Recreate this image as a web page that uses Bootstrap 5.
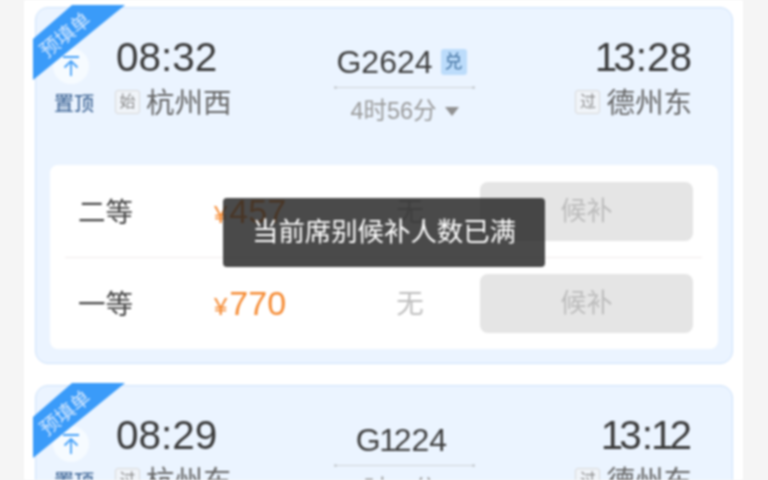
<!DOCTYPE html>
<html lang="zh">
<head>
<meta charset="utf-8">
<title>车次列表</title>
<link href="https://cdn.jsdelivr.net/npm/bootstrap@5.3.0/dist/css/bootstrap.min.css" rel="stylesheet">
<style>
html,body{height:480px;overflow:hidden;background:#f5f5f5;}
body{font-family:"Liberation Sans","Noto Sans CJK SC",sans-serif;color:#3c3c3c;}
.sheet{position:relative;width:719px;height:480px;margin-left:24px;background:#fff;padding:7px 10px 0 11px;filter:blur(.8px);overflow:hidden;}
.trip{position:relative;background:#ebf4ff;border:1.5px solid #cde2fb;border-radius:13px;height:357px;margin-bottom:21px;}
.ribbon{position:absolute;left:-4px;top:-3px;width:93px;height:75px;}
.ribbon-text{position:absolute;left:-3px;top:16px;width:64px;text-align:center;font-size:19.5px;line-height:22px;color:#d3e7fe;transform:rotate(-39deg);white-space:nowrap;}
.head{height:157px;}
.pin{width:80px;padding-top:40px;flex:none;}
.pin-disc{width:36px;height:36px;border-radius:50%;background:#f6fbff;margin-left:17px;}
.pin-label{font-size:20px;line-height:24px;color:#4a6f9d;font-weight:500;margin:8px 0 0 18px;white-space:nowrap;}
.dep{width:218px;flex:none;padding-top:26px;}
.clock{font-size:40.5px;line-height:46px;color:#3a3a3a;}
.one{letter-spacing:-.1em;margin-left:-.05em;}
.place{font-size:28.5px;line-height:36px;color:#666;margin-top:5px;white-space:nowrap;}
.dep .place{margin-left:-1px;}
.stop{display:inline-flex;align-items:center;justify-content:center;width:25px;height:24px;border:1px solid #d8d8d8;border-radius:3px;font-size:16px;line-height:1;color:#8b8b8b;background:#f0f4f9;margin-right:2px;position:relative;top:-1px;}
.mid{width:141px;flex:none;padding-top:34px;}
.code-line{height:45px;padding-right:6px;}
.code{font-size:32px;line-height:40px;color:#3f3f3f;}
.exch{display:inline-flex;align-items:center;justify-content:center;width:26px;height:26px;background:#bcdcfb;border-radius:3px;font-size:18px;line-height:1;color:#41709f;margin-top:7px;}
.rail{position:relative;height:1px;background:#cfd3d8;}
.rail::before,.rail::after{content:"";position:absolute;top:-1px;width:3px;height:3px;border-radius:50%;background:#c6cbd1;}
.rail::before{left:0}.rail::after{right:0}
.span{font-size:23.5px;line-height:30px;color:#999;margin-top:8px;white-space:nowrap;}
.tri{width:0;height:0;border-left:7px solid transparent;border-right:7px solid transparent;border-top:9px solid #8f8f8f;}
.arr{padding:26px 40px 0 0;}
.panel{background:#fff;border-radius:8px;margin:0 14px;height:184px;}
.seat-row{height:91.5px;padding:16.5px 25px 0 28px;}
.grade{width:136px;font-size:27.5px;line-height:59px;color:#444;flex:none;padding-top:1px;}
.price{width:126px;line-height:59px;color:#f58a32;font-size:34px;flex:none;}
.yen{font-size:24px;margin-right:2px;}
.left{width:140px;text-align:center;font-size:27.5px;line-height:59px;color:#bdbdbd;flex:none;}
.btn.wait{width:213px;height:59px;padding:0;border:0;border-radius:8px;font-size:26px;line-height:59px;flex:none;--bs-btn-disabled-bg:#e5e5e5;--bs-btn-disabled-color:#bcbcbc;--bs-btn-disabled-opacity:1;}
.rule{height:1px;background:#f1ebeb;margin:0 16px 0 15px;}
.toast-box{position:absolute;left:199px;top:198px;width:322px;height:69px;background:rgba(34,34,34,.82);border-radius:4px;color:#fff;font-size:26.4px;display:flex;align-items:center;justify-content:center;white-space:nowrap;}
</style>
</head>
<body>
<div class="sheet">

  <div class="trip">
    <svg class="ribbon" viewBox="0 0 93 75"><polygon points="40,0 93,0 1,75 1,34" fill="#3a9bf9"/></svg>
    <div class="ribbon-text">预填单</div>
    <div class="head d-flex">
      <div class="pin">
        <div class="pin-disc d-flex align-items-center justify-content-center">
          <svg width="18" height="22" viewBox="0 0 18 22" fill="none" stroke="#45a0f8" stroke-width="1.8"><path d="M1 2h16M9 21V6M2.5 12.5 9 6l6.500 6.500"/></svg>
        </div>
        <div class="pin-label">置顶</div>
      </div>
      <div class="dep">
        <div class="clock">08:32</div>
        <div class="place d-flex align-items-center gap-1"><span class="stop">始</span>杭州西</div>
      </div>
      <div class="mid">
        <div class="code-line d-flex justify-content-center align-items-start gap-2"><span class="code">G2624</span><span class="exch">兑</span></div>
        <div class="rail"></div>
        <div class="span d-flex justify-content-center align-items-center gap-2">4时56分<span class="tri"></span></div>
      </div>
      <div class="arr flex-grow-1 text-end">
        <div class="clock"><span class="one">1</span>3:28</div>
        <div class="place d-flex justify-content-end align-items-center gap-1"><span class="stop">过</span>德州东</div>
      </div>
    </div>
    <div class="panel">
      <div class="seat-row d-flex">
        <div class="grade">二等</div>
        <div class="price"><span class="yen">¥</span>457</div>
        <div class="left">无</div>
        <button class="btn wait" disabled>候补</button>
      </div>
      <div class="rule"></div>
      <div class="seat-row d-flex">
        <div class="grade">一等</div>
        <div class="price"><span class="yen">¥</span>770</div>
        <div class="left">无</div>
        <button class="btn wait" disabled>候补</button>
      </div>
    </div>
  </div>

  <div class="trip">
    <svg class="ribbon" viewBox="0 0 93 75"><polygon points="40,0 93,0 1,75 1,34" fill="#3a9bf9"/></svg>
    <div class="ribbon-text">预填单</div>
    <div class="head d-flex">
      <div class="pin">
        <div class="pin-disc d-flex align-items-center justify-content-center">
          <svg width="18" height="22" viewBox="0 0 18 22" fill="none" stroke="#45a0f8" stroke-width="1.8"><path d="M1 2h16M9 21V6M2.5 12.5 9 6l6.500 6.500"/></svg>
        </div>
        <div class="pin-label">置顶</div>
      </div>
      <div class="dep">
        <div class="clock">08:29</div>
        <div class="place d-flex align-items-center gap-1"><span class="stop">过</span>杭州东</div>
      </div>
      <div class="mid">
        <div class="code-line d-flex justify-content-center align-items-start"><span class="code">G<span class="one">1</span>224</span></div>
        <div class="rail"></div>
        <div class="span d-flex justify-content-center align-items-center gap-2">4时43分<span class="tri"></span></div>
      </div>
      <div class="arr flex-grow-1 text-end">
        <div class="clock"><span class="one">1</span>3:<span class="one">1</span>2</div>
        <div class="place d-flex justify-content-end align-items-center gap-1"><span class="stop">过</span>德州东</div>
      </div>
    </div>
  </div>

  <div class="toast-box">当前席别候补人数已满</div>
</div>
</body>
</html>
